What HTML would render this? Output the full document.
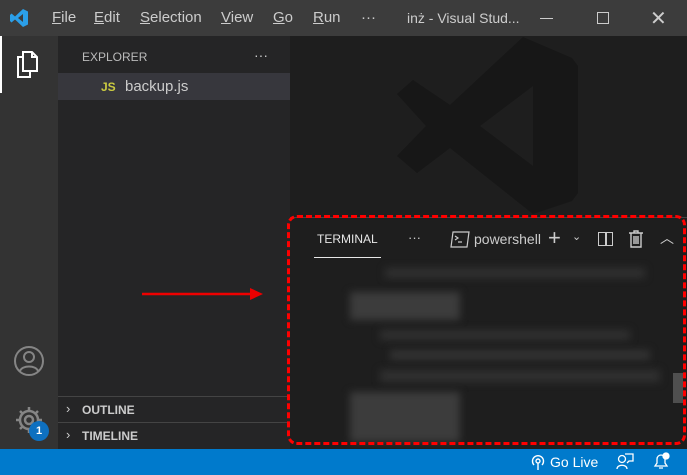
<!DOCTYPE html><html><head><style>
*{margin:0;padding:0;box-sizing:border-box}
body{width:687px;height:475px;overflow:hidden;background:#1e1e1e;font-family:"Segoe UI","Liberation Sans",sans-serif;position:relative}
.a{position:absolute}
.menu span{position:absolute;top:9px;color:#ccc;font-size:15px}
.bl{position:absolute;background:#3c3c3c;filter:blur(4px)}
</style></head><body>
<div class="a" style="left:0;top:0;width:687px;height:36px;background:#3c3c3c"></div>
<svg class="a" style="left:9px;top:8px" width="20" height="20" viewBox="0 0 20 20"><path d="M14 1 L19 3.5 V16.5 L14 19 L6 11.5 L2.5 14.5 L1 13 V7 L2.5 5.5 L6 8.5 Z M14 6 L9 10 L14 14 Z" fill="#2b9fe8" fill-rule="evenodd"/></svg>
<div class="menu">
<span style="left:52px"><u>F</u>ile</span><span style="left:94px"><u>E</u>dit</span><span style="left:140px"><u>S</u>election</span><span style="left:221px"><u>V</u>iew</span><span style="left:273px"><u>G</u>o</span><span style="left:313px"><u>R</u>un</span><span style="left:361px">···</span><span style="left:407px;font-size:14px;top:10px">inż - Visual Stud...</span>
</div>
<div class="a" style="left:540px;top:18px;width:13px;height:1px;background:#ccc"></div>
<div class="a" style="left:597px;top:12px;width:12px;height:12px;border:1px solid #ccc"></div>
<div class="a" style="left:650px;top:6px;color:#ccc;font-size:20px">✕</div>
<div class="a" style="left:0;top:36px;width:58px;height:413px;background:#333"></div>
<div class="a" style="left:0;top:36px;width:2px;height:57px;background:#fff"></div>
<svg class="a" style="left:14px;top:49px" width="30" height="30" viewBox="0 0 30 30" fill="none" stroke="#fff" stroke-width="2"><path d="M9 3 H18 L23 8 V22 H9 Z M18 3 V8 H23"/><path d="M9 8 H4 V28 H16 V22"/></svg>
<svg class="a" style="left:13px;top:345px" width="32" height="32" viewBox="0 0 32 32" fill="none" stroke="#858585" stroke-width="2"><circle cx="16" cy="16" r="14"/><circle cx="16" cy="12" r="5"/><path d="M7 26 C9 20 23 20 25 26"/></svg>
<svg class="a" style="left:13px;top:404px" width="32" height="32" viewBox="0 0 32 32" fill="none" stroke="#858585" stroke-width="2.5"><circle cx="16" cy="16" r="4"/><path d="M16 3 L16 7 M16 25 L16 29 M3 16 L7 16 M25 16 L29 16 M7 7 L10 10 M22 22 L25 25 M25 7 L22 10 M7 25 L10 22"/><circle cx="16" cy="16" r="9"/></svg>
<div class="a" style="left:29px;top:421px;width:20px;height:20px;border-radius:50%;background:#0e70c0;color:#fff;font-size:11px;font-weight:bold;text-align:center;line-height:20px">1</div>
<div class="a" style="left:58px;top:36px;width:232px;height:413px;background:#252526"></div>
<div class="a" style="left:82px;top:50px;color:#bbb;font-size:12px">EXPLORER</div>
<div class="a" style="left:254px;top:47px;color:#ccc;font-size:14px">···</div>
<div class="a" style="left:58px;top:73px;width:232px;height:27px;background:#37373d"></div>
<div class="a" style="left:101px;top:80px;color:#cbcb41;font-size:12px;font-weight:bold">JS</div>
<div class="a" style="left:125px;top:78px;color:#ccc;font-size:15px">backup.js</div>
<div class="a" style="left:58px;top:396px;width:232px;height:1px;background:#444"></div>
<div class="a" style="left:58px;top:422px;width:232px;height:1px;background:#444"></div>
<div class="a" style="left:66px;top:401px;color:#ccc;font-size:13px">›</div>
<div class="a" style="left:82px;top:403px;color:#ccc;font-size:12px;font-weight:bold">OUTLINE</div>
<div class="a" style="left:66px;top:427px;color:#ccc;font-size:13px">›</div>
<div class="a" style="left:82px;top:429px;color:#ccc;font-size:12px;font-weight:bold">TIMELINE</div>
<svg class="a" style="left:290px;top:36px" width="397" height="180"><path d="M107 58 L123 44 L160 69 L233 1 L282 22 L288 30 L288 157 L282 165 L243 178 L160 112 L127 137 L107 120 L136 90 Z M243 50 L190 90 L243 130 Z" fill="#171717" fill-rule="evenodd"/></svg>
<div class="a" style="left:290px;top:217px;width:397px;height:1px;background:#444"></div>
<div class="a" style="left:317px;top:232px;color:#e7e7e7;font-size:12px">TERMINAL</div>
<div class="a" style="left:314px;top:257px;width:67px;height:1px;background:#e7e7e7"></div>
<div class="a" style="left:408px;top:230px;color:#ccc;font-size:13px">···</div>
<svg class="a" style="left:450px;top:231px" width="20" height="17" viewBox="0 0 20 17" fill="none" stroke="#ccc" stroke-width="1.2"><path d="M3 1 H19 L17 16 H1 Z M5 5 L8 7 L5 9 M8 11 H12"/></svg>
<div class="a" style="left:474px;top:231px;color:#ccc;font-size:14px">powershell</div>
<div class="a" style="left:548px;top:225px;color:#ccc;font-size:22px;font-weight:300">+</div>
<div class="a" style="left:572px;top:230px;color:#ccc;font-size:11px">⌄</div>
<div class="a" style="left:598px;top:232px;width:15px;height:14px;border:1.5px solid #ccc"></div>
<div class="a" style="left:605px;top:232px;width:1.5px;height:14px;background:#ccc"></div>
<svg class="a" style="left:628px;top:230px" width="16" height="18" viewBox="0 0 16 18" fill="none" stroke="#ccc" stroke-width="1.4"><path d="M1 3 H15 M6 3 V1 H10 V3 M3 3 V17 H13 V3 M6 6 V14 M8 6 V14 M10 6 V14"/></svg>
<div class="a" style="left:660px;top:228px;color:#ccc;font-size:14px">︿</div>
<div class="bl" style="left:385px;top:268px;width:260px;height:10px;background:#303030"></div>
<div class="bl" style="left:350px;top:292px;width:110px;height:28px"></div>
<div class="bl" style="left:380px;top:330px;width:250px;height:10px;background:#303030"></div>
<div class="bl" style="left:390px;top:350px;width:260px;height:10px;background:#333"></div>
<div class="bl" style="left:380px;top:370px;width:280px;height:12px;background:#303030"></div>
<div class="bl" style="left:350px;top:392px;width:110px;height:50px"></div>
<div class="a" style="left:673px;top:373px;width:10px;height:30px;background:#4f4f4f"></div>
<div class="a" style="left:287px;top:215px;width:399px;height:230px;border:3px dashed #f00;border-radius:10px"></div>
<svg class="a" style="left:140px;top:286px" width="125" height="16"><path d="M2 8 H112" stroke="#e00" stroke-width="2.5"/><path d="M110 2 L123 8 L110 14 Z" fill="#e00"/></svg>
<div class="a" style="left:0;top:449px;width:687px;height:26px;background:#007acc"></div>
<svg class="a" style="left:530px;top:454px" width="16" height="17" viewBox="0 0 16 17" fill="none" stroke="#fff" stroke-width="1.4"><circle cx="8" cy="7" r="2"/><path d="M4 11 A5.5 5.5 0 1 1 12 11 M8 9 V16"/></svg>
<div class="a" style="left:550px;top:454px;color:#fff;font-size:14px">Go Live</div>
<svg class="a" style="left:616px;top:453px" width="18" height="18" viewBox="0 0 18 18" fill="none" stroke="#fff" stroke-width="1.3"><circle cx="6" cy="6" r="3.5"/><path d="M1 16 C1 11 11 11 11 16 M9 1 H17 V8 H13 L11 10"/></svg>
<svg class="a" style="left:652px;top:452px" width="18" height="19" viewBox="0 0 18 19" fill="none" stroke="#fff" stroke-width="1.3"><path d="M3 14 H15 L13 11 V7 A4 4 0 0 0 5 7 V11 Z M7 16 H11"/><circle cx="14" cy="4" r="3" fill="#fff"/></svg>
</body></html>
